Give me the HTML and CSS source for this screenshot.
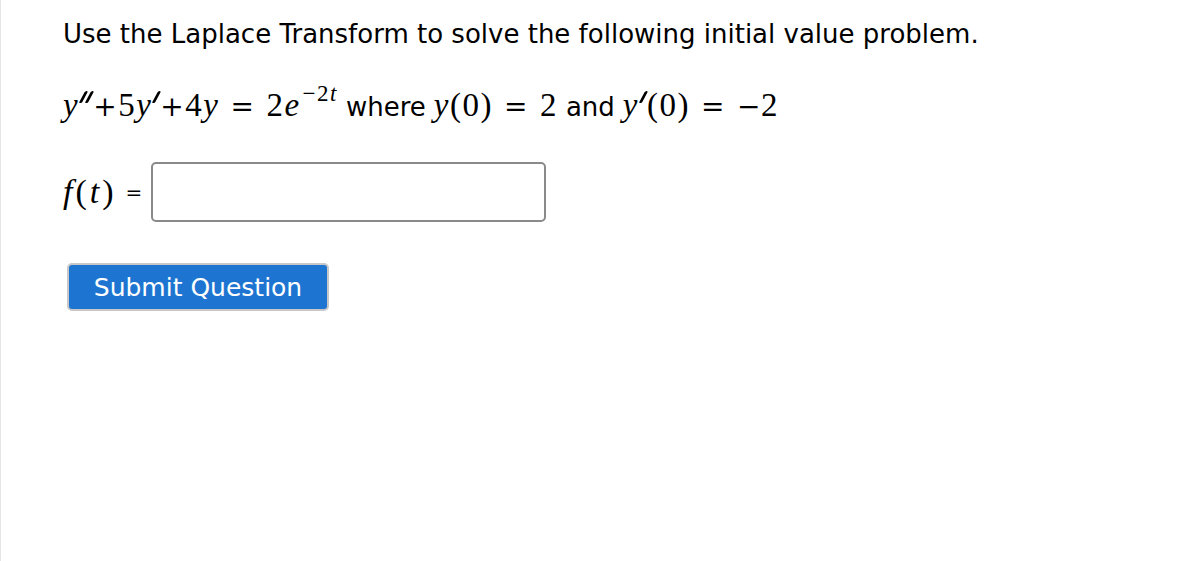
FILE: index.html
```html
<!DOCTYPE html>
<html>
<head>
<meta charset="utf-8">
<link rel="stylesheet" href="styles.css">
</head>
<body>
<div class="page">
  <p class="intro">Use the Laplace Transform to solve the following initial value problem.</p>
  <p class="problem">
    <span class="math"><i>y</i><span class="primes"><span class="pr"></span><span class="pr"></span></span><span class="op plus">+</span>5<i>y</i><span class="primes"><span class="pr"></span></span><span class="op plus">+</span>4<i>y</i><span class="op rel">=</span>2<i>e</i><sup class="exp">−2<i>t</i></sup></span>
    <span class="word">where</span>
    <span class="math"><i>y</i>(0)<span class="op rel">=</span>2</span>
    <span class="word">and</span>
    <span class="math"><i>y</i><span class="primes"><span class="pr"></span></span>(0)<span class="op rel">=</span><span class="op minus">−</span>2</span>
  </p>
  <div class="answer-row">
    <span class="math fn"><i>f</i>(<i>t</i>)</span>
    <span class="eq">=</span>
    <input class="answer" type="text">
  </div>
  <button class="submit" type="button">Submit Question</button>
</div>
</body>
</html>
```
FILE: styles.css
```css
html, body {
  margin: 0;
  padding: 0;
  background: #fff;
}
body {
  height: 561px;
  border-left: 1px solid #e6e6e6;
  box-sizing: border-box;
  font-family: "DejaVu Sans", sans-serif;
  color: #000;
}
.page {
  padding: 18px 0 0 62px;
}
.intro {
  margin: 0;
  font-size: 26px;
  line-height: 32px;
}
.problem {
  margin: 35px 0 0 0;
  font-size: 26px;
  line-height: 40px;
  display: flex;
  align-items: baseline;
  gap: 8px;
}
.math {
  font-family: "Liberation Serif", "DejaVu Serif", serif;
  font-size: 33px;
  letter-spacing: 1.5px;
  white-space: nowrap;
}
.math i {
  font-style: italic;
}
.op {
  font-family: "DejaVu Serif", serif;
  font-size: 28px;
  font-weight: 300;
}
.primes {
  display: inline-flex;
  gap: 3px;
  margin: 0 2px 0 3px;
  vertical-align: 13px;
}
.pr {
  display: inline-block;
  width: 3px;
  height: 12px;
  background: #000;
  border-radius: 1.5px 1.5px 1px 1px;
  transform: skewX(-28deg);
}
.plus {
  margin: 0;
}
.rel {
  margin: 0 11px;
}
.minus {
  margin-right: -1px;
}
.exp {
  font-size: 23px;
  vertical-align: 15px;
  line-height: 0;
  margin-left: 2px;
}
.answer-row {
  margin-top: 35px;
  display: flex;
  align-items: center;
  gap: 9px;
}
.fn {
  font-size: 34px;
  letter-spacing: 3px;
}
.eq {
  font-size: 20px;
}
.answer {
  width: 395px;
  height: 60px;
  box-sizing: border-box;
  border: 2px solid #8a8a8a;
  border-radius: 5px;
  margin: 0;
  padding: 0 8px;
  font-size: 20px;
  background: #fff;
}
.submit {
  display: block;
  margin: 41px 0 0 4px;
  width: 262px;
  height: 48px;
  box-sizing: border-box;
  background: #1e75d1;
  color: #fff;
  border: 2px solid #c8c8c8;
  border-radius: 5px;
  font-family: "DejaVu Sans", sans-serif;
  font-size: 25px;
  padding: 0;
}
```
